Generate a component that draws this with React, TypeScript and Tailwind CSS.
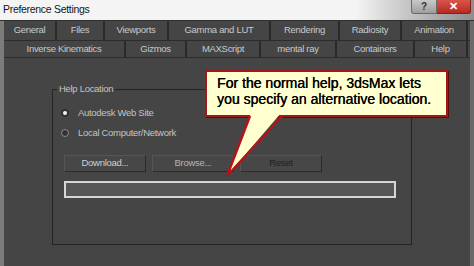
import React from "react";

const row1 = [
    { label: "General", w: 53 },
    { label: "Files", w: 48 },
    { label: "Viewports", w: 64 },
    { label: "Gamma and LUT", w: 102 },
    { label: "Rendering", w: 69 },
    { label: "Radiosity", w: 62 },
    { label: "Animation", w: 66 },
];

const row2 = [
    { label: "Inverse Kinematics", w: 122 },
    { label: "Gizmos", w: 61 },
    { label: "MAXScript", w: 74 },
    { label: "mental ray", w: 76 },
    { label: "Containers", w: 78 },
    { label: "Help", w: 53 },
];

const TabRow = ({ tabs, h }: { tabs: { label: string; w: number }[]; h: string }) => (
    <div className={`flex border-b border-[#2c2c2c] ${h}`}>
        {tabs.map((t) => (
            <div
                key={t.label}
                style={{ width: t.w }}
                className="flex items-center justify-center border-r-2 border-[#2a2a2a] text-[9.5px] tracking-[-0.3px] text-[#c9c9c9]">
                {t.label}
            </div>
        ))}
    </div>
);

const Button = ({ label, tone }: { label: string; tone: string }) => (
    <div
        className={`flex h-[17px] w-[82px] items-center justify-center border border-[#2b2b2b] border-t-[#555] border-l-[#555] bg-[#474747] text-[9.5px] tracking-[-0.3px] ${tone}`}>
        {label}
    </div>
);

export default function App() {
    return (
        <div className="relative h-[266px] w-[474px] overflow-hidden bg-[#454545] font-['Liberation_Sans',Arial,sans-serif]">
            {/* title bar */}
            <div className="flex h-[20px] bg-linear-to-r from-[#f4f4f4] from-75% to-[#8d8d8d]">
                <div className="pl-[3px] pt-[3px] text-[10.5px] leading-[13px] tracking-[-0.3px] text-[#151515]">
                    Preference Settings
                </div>
                <div className="ml-auto mr-[3px] flex h-[14px]">
                    <div className="flex w-[26px] items-center justify-center rounded-bl-[3px] border border-t-0 border-[#6b6b6b] bg-linear-to-b from-[#c9c9c9] to-[#9e9e9e] text-[10px] font-bold text-[#333]">
                        ?
                    </div>
                    <div className="flex w-[34px] items-center justify-center rounded-br-[3px] border border-t-0 border-l-0 border-[#7a2620] bg-linear-to-b from-[#d9544a] to-[#b8281f] text-[11px] font-bold text-white">
                        ✕
                    </div>
                </div>
            </div>

            <div className="flex h-[246px] border-t border-[#2f2f2f]">
                <div className="w-[4px] bg-[#7c7c7c]" />
                <div className="flex w-[466px] flex-col bg-[#454545]">
                    <TabRow tabs={row1} h="h-[20px]" />
                    <TabRow tabs={row2} h="h-[17px]" />

                    {/* panel */}
                    <div className="relative ml-[48px] mt-[31px] h-[156px] w-[360px] border border-[#242424]">
                        <div className="absolute left-[4px] top-[-7px] bg-[#454545] px-[2px] text-[9.5px] leading-[12px] tracking-[-0.3px] text-[#c4c4c4]">
                            Help Location
                        </div>
                        <div className="flex flex-col gap-[8px] pl-[8px] pt-[17px]">
                            <div className="flex h-[12px] items-center gap-[9px] text-[9.5px] tracking-[-0.3px] text-[#c4c4c4]">
                                <div className="flex h-[8px] w-[8px] items-center justify-center rounded-full border border-[#2a2a2a] bg-[#3a3a3a]">
                                    <div className="h-[4px] w-[4px] rounded-full bg-[#f2f2f2]" />
                                </div>
                                Autodesk Web Site
                            </div>
                            <div className="flex h-[12px] items-center gap-[9px] text-[9.5px] tracking-[-0.3px] text-[#c4c4c4]">
                                <div className="h-[8px] w-[8px] rounded-full border border-[#8a8a8a] bg-[#333]" />
                                Local Computer/Network
                            </div>
                        </div>
                        <div className="ml-[11px] mt-[16px] flex gap-[6px]">
                            <Button label="Download..." tone="text-[#cfcfcf]" />
                            <Button label="Browse..." tone="text-[#b5b5b5]" />
                            <Button label="Reset" tone="text-[#1f1f1f]" />
                        </div>
                        <div className="ml-[11px] mt-[9px] h-[17px] w-[332px] border-2 border-[#d6d6d6] bg-[#575757]" />
                    </div>
                </div>
                <div className="flex-1 bg-[#6a6a6a]" />
            </div>

            {/* callout */}
            <div className="absolute left-[205px] top-[70px] h-[47px] w-[243px] border-2 border-[#a3161b] bg-[#ffffcf] pl-[10px] pt-[3px] text-[14px] leading-[16px] text-black shadow-[1px_1px_0_#5a0d0d] [text-shadow:0.35px_0_0_#000]">
                For the normal help, 3dsMax lets
                <br />
                you specify an alternative location.
            </div>
            <svg className="absolute left-0 top-0" width="474" height="266" viewBox="0 0 474 266">
                <polygon points="251,113 227,176 281,113" fill="#ffffcf" />
                <polyline
                    points="250,116 227,176 282,116"
                    fill="none"
                    stroke="#b3141b"
                    strokeWidth="2.5"
                    strokeLinejoin="miter"
                />
            </svg>
        </div>
    );
}
